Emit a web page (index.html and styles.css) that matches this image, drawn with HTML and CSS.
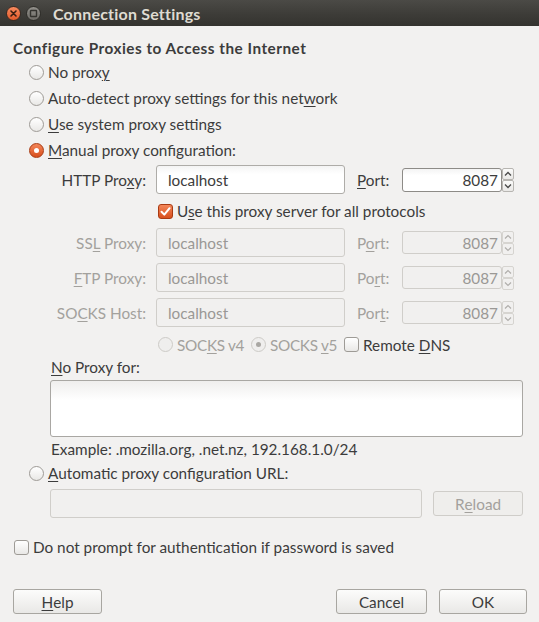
FILE: index.html
```html
<!DOCTYPE html>
<html>
<head>
<meta charset="utf-8">
<title>Connection Settings</title>
<link rel="stylesheet" href="styles.css">
</head>
<body>
<div class="window">
  <div class="titlebar">
    <span class="wbtn close"><svg width="9" height="9" viewBox="0 0 9 9"><path d="M2 2 L7 7 M7 2 L2 7" stroke="#3a1e12" stroke-width="1.6" stroke-linecap="round"/></svg></span>
    <span class="wbtn max"><svg width="9" height="9" viewBox="0 0 9 9"><rect x="1.5" y="1.5" width="6" height="6" rx="0.5" fill="none" stroke="#34332f" stroke-width="1.4"/></svg></span>
    <span class="title">Connection Settings</span>
  </div>
  <div class="content">
    <div class="heading">Configure Proxies to Access the Internet</div>
    <div class="radios">
      <div class="opt"><span class="radio"></span><span>No prox<u>y</u></span></div>
      <div class="opt"><span class="radio"></span><span>Auto-detect proxy settings for this net<u>w</u>ork</span></div>
      <div class="opt"><span class="radio"></span><span><u>U</u>se system proxy settings</span></div>
      <div class="opt"><span class="radio on"></span><span><u>M</u>anual proxy configuration:</span></div>
    </div>

    <div class="proxies">
      <div class="prow">
        <div class="lbl">HTTP Pro<u>x</u>y:</div>
        <div class="field host">localhost</div>
        <div class="plbl"><u>P</u>ort:</div>
        <div class="spin">8087</div>
        <div class="spinbtns"><span class="sb"><svg width="10" height="10" viewBox="0 0 10 10"><path d="M2 6.5 L5 3.5 L8 6.5" fill="none" stroke="#4a4a4a" stroke-width="1.3"/></svg></span><span class="sb"><svg width="10" height="10" viewBox="0 0 10 10"><path d="M2 3.5 L5 6.5 L8 3.5" fill="none" stroke="#4a4a4a" stroke-width="1.3"/></svg></span></div>
      </div>

      <div class="checkrow"><span class="check on"><svg width="13" height="13" viewBox="0 0 13 13"><path d="M2.5 6.8 L5.3 9.6 L10.6 3.2" fill="none" stroke="#fff" stroke-width="2" stroke-linecap="round" stroke-linejoin="round"/></svg></span><span>U<u>s</u>e this proxy server for all protocols</span></div>

      <div class="prow">
        <div class="lbl dis">SS<u>L</u> Proxy:</div>
        <div class="field host dis">localhost</div>
        <div class="plbl dis">P<u>o</u>rt:</div>
        <div class="spin dis">8087</div>
        <div class="spinbtns dis"><span class="sb"><svg width="10" height="10" viewBox="0 0 10 10"><path d="M2 6.5 L5 3.5 L8 6.5" fill="none" stroke="#b0aeab" stroke-width="1.2"/></svg></span><span class="sb"><svg width="10" height="10" viewBox="0 0 10 10"><path d="M2 3.5 L5 6.5 L8 3.5" fill="none" stroke="#b0aeab" stroke-width="1.2"/></svg></span></div>
      </div>

      <div class="prow gap">
        <div class="lbl dis"><u>F</u>TP Proxy:</div>
        <div class="field host dis">localhost</div>
        <div class="plbl dis">Po<u>r</u>t:</div>
        <div class="spin dis">8087</div>
        <div class="spinbtns dis"><span class="sb"><svg width="10" height="10" viewBox="0 0 10 10"><path d="M2 6.5 L5 3.5 L8 6.5" fill="none" stroke="#b0aeab" stroke-width="1.2"/></svg></span><span class="sb"><svg width="10" height="10" viewBox="0 0 10 10"><path d="M2 3.5 L5 6.5 L8 3.5" fill="none" stroke="#b0aeab" stroke-width="1.2"/></svg></span></div>
      </div>

      <div class="prow gap">
        <div class="lbl dis">SO<u>C</u>KS Host:</div>
        <div class="field host dis">localhost</div>
        <div class="plbl dis">Por<u>t</u>:</div>
        <div class="spin dis">8087</div>
        <div class="spinbtns dis"><span class="sb"><svg width="10" height="10" viewBox="0 0 10 10"><path d="M2 6.5 L5 3.5 L8 6.5" fill="none" stroke="#b0aeab" stroke-width="1.2"/></svg></span><span class="sb"><svg width="10" height="10" viewBox="0 0 10 10"><path d="M2 3.5 L5 6.5 L8 3.5" fill="none" stroke="#b0aeab" stroke-width="1.2"/></svg></span></div>
      </div>
    </div>

    <div class="socksrow">
      <span class="opt2 dis"><span class="radio dis"></span><span class="stxt">SOC<u>K</u>S v4</span></span>
      <span class="opt2 dis"><span class="radio dis dot"></span><span class="stxt">SOCKS <u>v</u>5</span></span>
      <span class="opt2"><span class="check"></span><span>Remote <u>D</u>NS</span></span>
    </div>

    <div class="noproxy">
      <div class="nplbl"><u>N</u>o Proxy for:</div>
      <div class="textarea"></div>
      <div class="example">Example: .mozilla.org, .net.nz, 192.168.1.0/24</div>
    </div>

    <div class="opt auto"><span class="radio"></span><span><u>A</u>utomatic proxy configuration URL:</span></div>
    <div class="urlrow">
      <div class="field dis url"></div>
      <div class="btn dis reload">R<u>e</u>load</div>
    </div>

    <div class="prompt"><span class="check"></span><span>Do not prompt for authent<u>i</u>cation if password is saved</span></div>
  </div>
  <div class="buttons">
    <div class="btn help"><u>H</u>elp</div>
    <div class="spacer"></div>
    <div class="btn cancel">Cancel</div>
    <div class="btn ok">OK</div>
  </div>
</div>
</body>
</html>
```

FILE: styles.css
```css
html, body {
  margin: 0;
  padding: 0;
}
body {
  background: #f2f1f0;
  font-family: Lato, "Open Sans", sans-serif;
  font-size: 15.3px;
  color: #3c3c3c;
}
u {
  text-decoration: underline;
  text-decoration-thickness: 1px;
  text-underline-offset: 2px;
}
.window {
  width: 539px;
  height: 622px;
  overflow: hidden;
  display: flex;
  flex-direction: column;
}
.titlebar {
  height: 26px;
  flex: none;
  display: flex;
  align-items: center;
  padding-left: 6px;
  background: linear-gradient(#4b4a46, #3d3c38 55%, #34332f);
}
.wbtn {
  width: 15px;
  height: 15px;
  border-radius: 50%;
  box-sizing: border-box;
  display: flex;
  align-items: center;
  justify-content: center;
}
.close {
  background: linear-gradient(#f78a5e, #e35b2c);
  border: 1px solid #3a2a22;
  margin-right: 5px;
}
.max {
  background: linear-gradient(#918f8a, #6e6c67);
  border: 1px solid #2e2d29;
}
.title {
  margin-left: 12px;
  font-weight: bold;
  font-size: 16px;
  color: #dfdbd2;
  letter-spacing: 0.2px;
}
.content {
  padding: 0 16px 0 13px;
  display: flex;
  flex-direction: column;
}
.heading {
  margin-top: 13px;
  line-height: 18px;
  font-weight: bold;
  letter-spacing: 0.5px;
}
.radios {
  margin-top: 2px;
  display: flex;
  flex-direction: column;
}
.opt {
  height: 26px;
  display: flex;
  align-items: center;
  gap: 4px;
  padding-left: 16px;
}
.radio {
  width: 15px;
  height: 15px;
  flex: none;
  box-sizing: border-box;
  border-radius: 50%;
  border: 1px solid #9e9b96;
  background: linear-gradient(#ffffff, #e9e8e6);
  position: relative;
}
.radio.on {
  border-color: #a93a12;
  background: linear-gradient(#f38659, #d84f1d);
}
.radio.on::after {
  content: "";
  position: absolute;
  left: 4px;
  top: 4px;
  width: 5px;
  height: 5px;
  border-radius: 50%;
  background: #fff;
}
.radio.dis {
  border-color: #cdcbc7;
  background: #efeeed;
}
.radio.dot::after {
  content: "";
  position: absolute;
  left: 4px;
  top: 4px;
  width: 5px;
  height: 5px;
  border-radius: 50%;
  background: #a9a7a3;
}
.check {
  width: 15px;
  height: 15px;
  flex: none;
  box-sizing: border-box;
  border-radius: 3px;
  border: 1px solid #9e9b96;
  background: linear-gradient(#ffffff, #e9e8e6);
  display: flex;
  align-items: center;
  justify-content: center;
}
.check.on {
  border-color: #a93a12;
  background: linear-gradient(#f38659, #d84f1d);
}

/* proxy rows */
.proxies {
  margin-top: 2px;
  margin-left: 27px;
  display: flex;
  flex-direction: column;
}
.prow {
  height: 29px;
  display: flex;
  align-items: center;
}
.prow.gap {
  margin-top: 6px;
}
.lbl {
  width: 106px;
  padding-right: 10px;
  text-align: right;
  white-space: nowrap;
}
.plbl {
  width: 45px;
  padding-left: 12px;
  white-space: nowrap;
}
.dis {
  color: #a3a19d;
}
.field {
  height: 29px;
  box-sizing: border-box;
  border: 1px solid #aeaca8;
  border-radius: 3px;
  background: linear-gradient(#f4f4f4, #ffffff 30%);
  padding-left: 11px;
  display: flex;
  align-items: center;
  color: #3c3c3c;
}
.host {
  width: 189px;
}
.field.dis {
  border-color: #d0ceca;
  background: #f1f0ef;
  color: #9a9895;
}
.spin {
  width: 100px;
  height: 24px;
  box-sizing: border-box;
  border: 1px solid #8d8b87;
  border-radius: 3px;
  background: linear-gradient(#f4f4f4, #ffffff 30%);
  display: flex;
  align-items: center;
  justify-content: flex-end;
  padding-right: 3px;
  color: #3c3c3c;
}
.spin.dis {
  height: 23px;
  border-color: #d0ceca;
  background: #f1f0ef;
  color: #9a9895;
}
.spinbtns {
  height: 24px;
  display: flex;
  flex-direction: column;
}
.sb {
  height: 12px;
  width: 12px;
  box-sizing: border-box;
  border: 1px solid #b7b5b1;
  border-radius: 2px;
  background: linear-gradient(#fbfbfa, #e9e8e6);
  display: flex;
  align-items: center;
  justify-content: center;
}
.spinbtns.dis .sb {
  border-color: #d6d4d0;
  background: #f1f0ef;
}
.checkrow {
  height: 34px;
  margin-left: 118px;
  display: flex;
  align-items: center;
  gap: 4px;
}

.socksrow {
  margin-top: 6px;
  margin-left: 145px;
  height: 23px;
  display: flex;
  align-items: center;
}
.opt2 {
  width: 93px;
  display: flex;
  align-items: center;
  gap: 4px;
  white-space: nowrap;
}
.stxt {
  letter-spacing: -0.3px;
}
.noproxy {
  margin-left: 37px;
  margin-top: 2px;
  display: flex;
  flex-direction: column;
}
.nplbl {
  line-height: 18px;
  padding-left: 1px;
}
.textarea {
  margin-top: 4px;
  height: 57px;
  box-sizing: border-box;
  border: 1px solid #a9a7a3;
  border-radius: 3px;
  background: linear-gradient(#efeeed, #ffffff 35%);
}
.example {
  margin-top: 3px;
  line-height: 18px;
  padding-left: 1px;
}
.auto {
  margin-top: 2px;
}
.urlrow {
  margin-top: 3px;
  margin-left: 37px;
  display: flex;
  align-items: center;
  gap: 11px;
}
.url {
  width: 372px;
  height: 29px;
  flex: none;
}
.btn {
  height: 25px;
  box-sizing: border-box;
  border: 1px solid #a8a6a1;
  border-radius: 3px;
  background: linear-gradient(#fcfcfb, #e9e8e6);
  display: flex;
  align-items: center;
  justify-content: center;
}
.btn.dis {
  border-color: #cfcdc9;
  background: #efeeec;
  color: #a3a19d;
}
.reload {
  width: 90px;
  height: 25px;
}
.prompt {
  margin-top: 20px;
  margin-left: 1px;
  height: 18px;
  display: flex;
  align-items: center;
  gap: 4px;
}
.buttons {
  margin-top: 33px;
  padding: 0 12px 0 13px;
  display: flex;
  align-items: center;
}
.spacer {
  flex: 1;
}
.help {
  width: 89px;
}
.cancel {
  width: 91px;
  margin-right: 12px;
}
.ok {
  width: 88px;
}
```
